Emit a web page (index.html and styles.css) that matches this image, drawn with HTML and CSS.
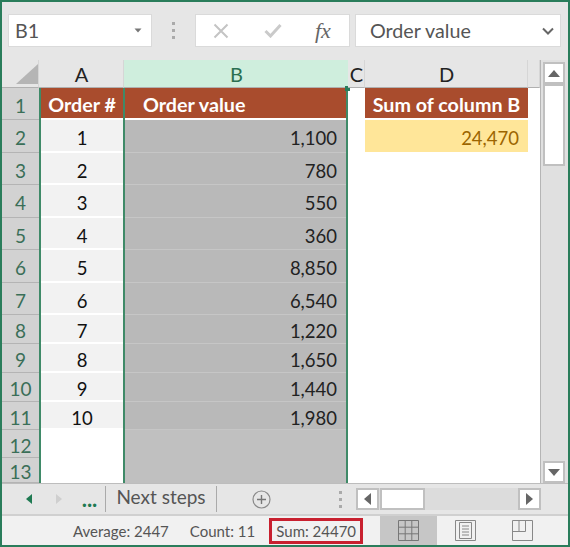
FILE: index.html
```html
<!DOCTYPE html>
<html lang="en">
<head>
  <meta charset="UTF-8">
  <title>Order value sum</title>
  <link rel="stylesheet" href="styles.css">
</head>
<body>
  <div class="window">

    <!-- formula bar -->
    <div class="formula-bar">
      <div class="box name-box">
        <span>B1</span>
        <svg width="8" height="5" viewBox="0 0 8 5"><path d="M0.5 0.5h7L4 4.5z" fill="#777"/></svg>
      </div>
      <div class="grip formula-grip"><i></i><i></i><i></i></div>
      <div class="box fx-box">
        <svg class="fx-cancel" width="16" height="16" viewBox="0 0 16 16"><path d="M1.5 1.5l13 13M14.5 1.5l-13 13" stroke="#c4c4c4" stroke-width="2" fill="none"/></svg>
        <svg class="fx-enter" width="18" height="15" viewBox="0 0 18 15"><path d="M1.5 8l5 5L16.5 2" stroke="#cacaca" stroke-width="3" fill="none"/></svg>
        <span class="fx-label">fx</span>
      </div>
      <div class="box value-box">
        <span>Order value</span>
        <svg width="12" height="8" viewBox="0 0 12 8"><path d="M1 1.5l5 5 5-5" stroke="#666" stroke-width="2" fill="none"/></svg>
      </div>
    </div>

    <!-- sheet -->
    <div class="sheet-row">
      <div class="sheet">
        <div class="col col-rows">
          <div class="head corner">
            <svg width="22" height="20" viewBox="0 0 22 20"><path d="M0 20L22 0v20z" fill="#b5b5b5"/></svg>
          </div>
          <div class="row-no">1</div>
          <div class="row-no">2</div>
          <div class="row-no">3</div>
          <div class="row-no">4</div>
          <div class="row-no">5</div>
          <div class="row-no">6</div>
          <div class="row-no">7</div>
          <div class="row-no">8</div>
          <div class="row-no">9</div>
          <div class="row-no">10</div>
          <div class="row-no">11</div>
          <div class="row-no">12</div>
          <div class="row-no">13</div>
        </div>

        <div class="col col-a">
          <div class="head">A</div>
          <div class="cell title">Order #</div>
          <div class="cell num">1</div>
          <div class="cell num">2</div>
          <div class="cell num">3</div>
          <div class="cell num">4</div>
          <div class="cell num">5</div>
          <div class="cell num">6</div>
          <div class="cell num">7</div>
          <div class="cell num">8</div>
          <div class="cell num">9</div>
          <div class="cell num">10</div>
          <div class="cell blank"></div>
          <div class="cell blank"></div>
        </div>

        <div class="col col-b">
          <div class="head head-active">B</div>
          <div class="cell title title-b">Order value</div>
          <div class="cell val">1,100</div>
          <div class="cell val">780</div>
          <div class="cell val">550</div>
          <div class="cell val">360</div>
          <div class="cell val">8,850</div>
          <div class="cell val">6,540</div>
          <div class="cell val">1,220</div>
          <div class="cell val">1,650</div>
          <div class="cell val">1,440</div>
          <div class="cell val">1,980</div>
          <div class="cell val empty"></div>
          <div class="cell val empty"></div>
          <div class="fill-handle"></div>
        </div>

        <div class="col col-c">
          <div class="head">C</div>
        </div>

        <div class="col col-d">
          <div class="head">D</div>
          <div class="cell title">Sum of column B</div>
          <div class="cell total">24,470</div>
        </div>

        <div class="col col-e">
          <div class="head"></div>
        </div>
      </div>

      <div class="vscroll">
        <div class="sbtn">
          <svg width="12" height="7" viewBox="0 0 12 7"><path d="M6 0l6 7H0z" fill="#666"/></svg>
        </div>
        <div class="vthumb"></div>
        <div class="sbtn">
          <svg width="12" height="7" viewBox="0 0 12 7"><path d="M6 7L0 0h12z" fill="#666"/></svg>
        </div>
      </div>
    </div>

    <!-- sheet tabs -->
    <div class="tabs">
      <div class="tab-nav">
        <svg width="6" height="10" viewBox="0 0 6 10"><path d="M6 0v10L0 5z" fill="#1f7a52"/></svg>
      </div>
      <div class="tab-nav">
        <svg width="6" height="10" viewBox="0 0 6 10"><path d="M0 0v10l6-5z" fill="#cfcfcf"/></svg>
      </div>
      <div class="tab-nav tab-more">...</div>
      <div class="tab-name">Next steps</div>
      <div class="tab-add">
        <svg width="19" height="19" viewBox="0 0 19 19"><circle cx="9.5" cy="9.5" r="8.5" stroke="#8a8a8a" stroke-width="1.2" fill="none"/><path d="M9.5 5v9M5 9.5h9" stroke="#777" stroke-width="1.4"/></svg>
      </div>
      <div class="grip tab-grip"><i></i><i></i><i></i></div>
      <div class="hscroll">
        <div class="sbtn hbtn">
          <svg width="7" height="12" viewBox="0 0 7 12"><path d="M0 6l7-6v12z" fill="#666"/></svg>
        </div>
        <div class="hthumb"></div>
        <div class="hbtn-push sbtn hbtn">
          <svg width="7" height="12" viewBox="0 0 7 12"><path d="M7 6L0 0v12z" fill="#666"/></svg>
        </div>
      </div>
    </div>

    <!-- status bar -->
    <div class="status">
      <span class="stat stat-avg">Average: 2447</span>
      <span class="stat stat-count">Count: 11</span>
      <span class="stat stat-sum">Sum: 24470</span>
      <div class="views">
        <div class="view view-on">
          <svg width="21" height="21" viewBox="0 0 21 21"><path d="M.5.5h20v20H.5zM7.2.5v20M13.8.5v20M.5 7.2h20M.5 13.8h20" stroke="#777" fill="none"/></svg>
        </div>
        <div class="view">
          <svg width="21" height="21" viewBox="0 0 21 21"><path d="M.5.5h20v20H.5z" stroke="#888" fill="none"/><path d="M4.5 2.5h12v16h-12zM7 6h7M7 9h7M7 12h7M7 15h7" stroke="#888" fill="none"/></svg>
        </div>
        <div class="view">
          <svg width="21" height="21" viewBox="0 0 21 21"><path d="M.5.5h20v20H.5zM.5 11.5h13M7 .5v11M13.5.5v11" stroke="#888" fill="none"/></svg>
        </div>
      </div>
    </div>

  </div>
</body>
</html>
```

FILE: styles.css
```css
/* Spreadsheet window */
* {
  box-sizing: border-box;
}
body {
  margin: 0;
  font-family: Lato, "Open Sans", sans-serif;
  color: #222;
}
.window {
  width: 570px;
  height: 547px;
  border: 2px solid #2a7d5b;
  background-color: #e6e6e6;
  overflow: hidden;
}

/* Formula bar */
.formula-bar {
  display: flex;
  height: 33px;
  margin-top: 12px;
  padding-left: 6px;
}
.box {
  display: flex;
  align-items: center;
  background-color: #fff;
  border: 1px solid #dadada;
  color: #555;
  font-size: 19.7px;
}
.name-box {
  width: 144px;
  padding: 0 9px 0 6px;
  justify-content: space-between;
}
.formula-grip {
  width: 43px;
}
.fx-box {
  width: 155px;
}
.fx-cancel {
  margin-left: 17px;
}
.fx-enter {
  margin-left: 35px;
}
.fx-label {
  margin-left: 33px;
  font-family: "Liberation Serif", serif;
  font-style: italic;
  font-size: 22px;
  color: #666;
}
.value-box {
  width: 206px;
  margin-left: 5px;
  padding: 0 6px 0 14px;
  justify-content: space-between;
}
.grip {
  display: flex;
  flex-direction: column;
  align-items: center;
  justify-content: center;
  gap: 4px;
}
.grip i {
  width: 3px;
  height: 3px;
  background-color: #aaa;
}

/* Sheet */
.sheet-row {
  display: flex;
  height: 423px;
  margin-top: 13px;
}
.sheet {
  --rows: 28px 32px 33px 32px 33px 32px 33px 32px 29px 29px 29px 28px 28px 25px;
  display: flex;
  width: 539px;
  background-color: #fff;
  border-right: 1px solid #b5b5b5;
}
.col {
  display: grid;
  grid-template-rows: var(--rows);
  position: relative;
}
.col-rows {
  width: 37px;
}
.col-a {
  width: 85px;
}
.col-b {
  width: 224px;
}
.col-c {
  width: 17px;
}
.col-d {
  width: 163px;
}
.col-e {
  width: 12px;
}
.head {
  display: flex;
  align-items: center;
  justify-content: center;
  padding-left: 1px;
  background-color: #e6e6e6;
  border-bottom: 1px solid #b0b0b0;
  border-right: 1px solid #d6d6d6;
  font-size: 20px;
}
.corner {
  align-items: flex-end;
  justify-content: flex-end;
  padding: 0 0 3px 0;
}
.head-active {
  background-color: #cfeedd;
  color: #2a6f50;
  border-right: 0;
}
.row-no {
  display: flex;
  align-items: center;
  justify-content: center;
  background-color: #d2d2d2;
  border-bottom: 1px solid #b4b4b4;
  color: #3a6f58;
  font-size: 19px;
  padding-top: 3px;
}
.cell {
  display: flex;
  align-items: center;
  box-shadow: inset 0 -2px 0 #fff;
  font-size: 18.5px;
  padding-top: 3px;
}
.col-a .cell {
  border-left: 2px solid #3f8a68;
  border-right: 1px solid #3f8a68;
  justify-content: center;
}
.num {
  background-color: #f2f2f2;
  color: #111;
}
.blank {
  box-shadow: none;
}
.col-b .cell {
  border-left: 1px solid #3f8a68;
  border-right: 2px solid #3f8a68;
}
.title {
  padding-top: 1px;
  background-color: #a94c2d;
  color: #fff;
  font-weight: bold;
  font-size: 19.7px;
}
.title-b {
  padding-left: 18px;
}
.val {
  justify-content: flex-end;
  padding-right: 9px;
  background-color: #b9b9b9;
  box-shadow: inset 0 -1px 0 #c6c6c6;
  color: #222;
}
.empty {
  background-color: #c0c0c0;
  box-shadow: none;
}
.fill-handle {
  position: absolute;
  top: 26px;
  right: -2px;
  width: 5px;
  height: 5px;
  background-color: #2a7d5b;
}
.col-d .title {
  justify-content: center;
}
.total {
  justify-content: flex-end;
  padding-right: 9px;
  background-color: #ffe699;
  color: #9c6500;
  box-shadow: inset 0 -1px 0 #fff;
}

/* Scrollbars */
.vscroll {
  display: flex;
  flex-direction: column;
  width: 27px;
  padding: 2px 3px 0 2px;
  background-color: #e0e0e0;
}
.sbtn {
  display: flex;
  align-items: center;
  justify-content: center;
  flex: none;
  height: 22px;
  background-color: #fff;
  border: 2px solid #c0c0c0;
}
.vthumb {
  height: 82px;
  margin-bottom: auto;
  background-color: #fff;
  border: 2px solid #c0c0c0;
}

/* Tabs */
.tabs {
  display: flex;
  align-items: center;
  height: 31px;
  padding-left: 12px;
  border-top: 1px solid #bdbdbd;
  color: #555;
}
.tab-nav {
  display: flex;
  align-items: center;
  justify-content: center;
  width: 30px;
}
.tab-more {
  width: 31px;
  height: 20px;
  color: #1f7a52;
  font-weight: bold;
  font-size: 22px;
  line-height: 6px;
}
.tab-name {
  width: 112px;
  height: 26px;
  border-left: 1px solid #aaa;
  border-right: 1px solid #aaa;
  font-size: 19px;
  line-height: 22px;
  text-align: center;
}
.tab-add {
  display: flex;
  margin-left: 35px;
}
.tab-grip {
  margin-left: 67px;
  width: 5px;
}
.hscroll {
  display: flex;
  width: 185px;
  margin-left: 13px;
  background-color: #dcdcdc;
}
.hbtn {
  width: 23px;
}
.hthumb {
  width: 45px;
  margin-left: 1px;
  background-color: #fff;
  border: 2px solid #c0c0c0;
}
.hbtn-push {
  margin-left: auto;
}

/* Status bar */
.status {
  display: flex;
  align-items: center;
  height: 31px;
  background-color: #f1f1f1;
  border-top: 2px solid #d0d0d0;
  color: #555;
  font-size: 15px;
}
.stat-avg {
  margin-left: 71px;
}
.stat-count {
  margin-left: 21px;
}
.stat-sum {
  width: 94px;
  margin-left: 14px;
  padding: 1px 0;
  border: 3px solid #c8202f;
  text-align: center;
}
.views {
  display: flex;
  align-self: stretch;
  margin-left: 17px;
}
.view {
  display: flex;
  align-items: center;
  justify-content: center;
  width: 57px;
}
.view-on {
  background-color: #c6c6c6;
}
```
